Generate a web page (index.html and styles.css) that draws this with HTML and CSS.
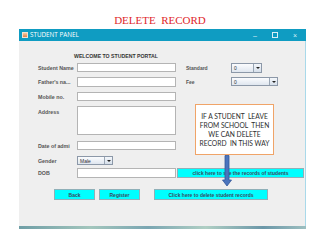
FILE: index.html
```html
<!DOCTYPE html>
<html lang="en">
<head>
    <meta charset="UTF-8">
    <meta name="viewport" content="width=device-width, initial-scale=1.0">
    <title>delete record</title>
    <link rel="stylesheet" href="styles.css">
</head>
<body>
 <h1 class="slide-title">DELETE&nbsp; RECORD</h1>

 <div class="window">
  <div class="titlebar">
   <span class="app-icon"></span>
   <span class="win-title">STUDENT PANEL</span>
   <div class="win-controls">
    <span class="ctl">&#8211;</span>
    <span class="ctl"><span class="max-box"></span></span>
    <span class="ctl">&#215;</span>
   </div>
  </div>

  <div class="panel">
   <div class="welcome">WELCOME TO STUDENT PORTAL</div>

   <div class="form">
    <label class="lbl">Student Name</label>
    <div class="field"></div>
    <div class="side">
     <span class="side-lbl">Standard</span>
     <div class="combo combo-std"><span class="combo-val">0</span><span class="combo-btn"></span></div>
    </div>

    <label class="lbl">Father's na...</label>
    <div class="field field-tall"></div>
    <div class="side">
     <span class="side-lbl">Fee</span>
     <div class="combo combo-fee"><span class="combo-val">0</span><span class="combo-btn"></span></div>
    </div>

    <label class="lbl">Mobile no.</label>
    <div class="field"></div>
    <div class="side"></div>

    <label class="lbl lbl-top">Address</label>
    <div class="field field-area"></div>
    <div class="side"></div>

    <label class="lbl">Date of admi</label>
    <div class="field"></div>
    <div class="side"></div>

    <label class="lbl">Gender</label>
    <div class="combo combo-gender"><span class="combo-val">Male</span><span class="combo-btn"></span></div>
    <div class="side"></div>

    <label class="lbl">DOB</label>
    <div class="field field-tall"></div>
    <div class="side">
     <button class="cyan-btn see-btn">click here to see the records of students</button>
    </div>
   </div>

   <div class="actions">
    <button class="cyan-btn act-back">Back</button>
    <button class="cyan-btn act-reg">Register</button>
    <button class="cyan-btn act-del">Click here to delete student records</button>
   </div>

   <!-- note pasted on top of the screenshot -->
   <div class="callout">IF A STUDENT&nbsp; LEAVE<br>FROM SCHOOL&nbsp; THEN<br>WE CAN DELETE<br>RECORD&nbsp; IN THIS WAY</div>
   <svg class="arrow" width="12" height="32" viewBox="0 0 12 32">
    <path d="M4 0.5 H8 V25 H10.5 L6 31 L1.5 25 H4 Z" fill="#4a74bd" stroke="#34589a" stroke-width="0.8"/>
   </svg>
  </div>
 </div>
 <div class="desktop-strip"></div>
</body>
</html>
```

FILE: styles.css
```css
        body {
            margin: 0;
            background-color: #ffffff;
            font-family: "Liberation Sans", Arial, sans-serif;
        }
        .slide-title {
            margin: 15px 0 3px 0;
            font-family: "Liberation Serif", "Times New Roman", serif;
            font-weight: normal;
            font-size: 11px;
            line-height: 11px;
            color: #e0272b;
            text-align: center;
        }
        .window {
            margin-left: 19px;
            width: 287px;
        }
        .titlebar {
            height: 12px;
            background-color: #0f9cc2;
            display: flex;
            align-items: center;
            color: #ffffff;
        }
        .app-icon {
            width: 6px;
            height: 6px;
            margin-left: 3px;
            background: linear-gradient(#f6c9a0, #e0824c);
            border: 0.5px solid #f4e3d0;
            box-sizing: border-box;
        }
        .win-title {
            margin-left: 2px;
            font-family: "Open Sans", sans-serif;
            font-size: 6.3px;
            line-height: 12px;
        }
        .win-controls {
            margin-left: auto;
            margin-right: 1px;
            display: flex;
        }
        .ctl {
            width: 20px;
            height: 12px;
            display: flex;
            align-items: center;
            justify-content: center;
            font-size: 7px;
            color: #d8f0f7;
        }
        .max-box {
            width: 4px;
            height: 4px;
            border: 0.8px solid #d8f0f7;
        }
        .panel {
            position: relative;
            height: 185px;
            background-color: #efefef;
            border-right: 1px solid #a9d9ea;
            box-sizing: border-box;
            padding-top: 11px;
        }
        .welcome {
            padding-left: 55px;
            height: 8px;
            font-size: 5.2px;
            line-height: 8px;
            font-weight: bold;
            color: #333;
        }
        .form {
            margin-top: 3px;
            display: grid;
            grid-template-columns: 58px 99px 1fr;
            grid-template-rows: 14px 15px 14px 35px 15px 12px 10px;
        }
        .lbl {
            padding-left: 19px;
            height: 9px;
            display: flex;
            align-items: center;
            font-size: 5.3px;
            font-weight: bold;
            color: #555;
            white-space: nowrap;
        }
        .lbl-top {
            align-items: flex-start;
            padding-top: 3px;
        }
        .field {
            height: 9px;
            background-color: #ffffff;
            border: 1px solid #b4b4b4;
            box-sizing: border-box;
        }
        .field-tall { height: 10px; }
        .field-area { height: 29px; }
        .side {
            display: flex;
            align-items: flex-start;
        }
        .side-lbl {
            width: 45px;
            margin-left: 10px;
            height: 10px;
            line-height: 10px;
            font-size: 5px;
            font-weight: bold;
            color: #555;
        }
        .combo {
            display: flex;
            height: 10px;
            border: 1px solid #8c98a8;
            box-sizing: border-box;
            background: linear-gradient(#fbfcfe, #dfe6ef);
        }
        .combo-std { width: 31px; }
        .combo-fee { width: 47px; height: 9px; }
        .combo-gender { width: 36px; height: 9px; }
        .combo-val {
            flex: 1;
            padding-left: 2px;
            font-size: 5px;
            line-height: 8px;
            color: #333;
        }
        .combo-btn {
            width: 7px;
            border-left: 1px solid #9aa6b4;
            background: linear-gradient(#f4f7fb, #d6dfea);
            position: relative;
        }
        .combo-btn::after {
            content: "";
            position: absolute;
            left: 1.5px;
            top: 2.5px;
            border-left: 2px solid transparent;
            border-right: 2px solid transparent;
            border-top: 2.5px solid #222;
        }
        .cyan-btn {
            height: 11px;
            padding: 0;
            background-color: #0ff;
            border: 1px solid #8fb0b8;
            box-sizing: border-box;
            font-family: "Liberation Sans", Arial, sans-serif;
            font-size: 5px;
            font-weight: bold;
            color: #3a4a60;
            white-space: nowrap;
        }
        .see-btn {
            margin-left: 1px;
            width: 127px;
            height: 10px;
        }
        .actions {
            margin-top: 11px;
            display: flex;
            padding-left: 35px;
        }
        .act-back { width: 41px; }
        .act-reg { width: 41px; margin-left: 4px; }
        .act-del { width: 114px; margin-left: 14px; }

        .callout {
            position: absolute;
            left: 176px;
            top: 63px;
            width: 79px;
            height: 51px;
            box-sizing: border-box;
            padding-top: 7px;
            background-color: #ffffff;
            border: 1px solid #f0a468;
            font-family: Lato, "Open Sans", sans-serif;
            font-size: 6.7px;
            line-height: 9px;
            color: #2e2e2e;
            text-align: center;
            white-space: nowrap;
        }
        .arrow {
            position: absolute;
            left: 202px;
            top: 114px;
        }
        .desktop-strip {
            margin-left: 19px;
            width: 287px;
            height: 3px;
            background: linear-gradient(90deg, #6f9ea6, #a3c6bd 25%, #7aa6b2 45%, #b0cfc4 65%, #6b97a8 85%, #9dbfc0);
        }
```
